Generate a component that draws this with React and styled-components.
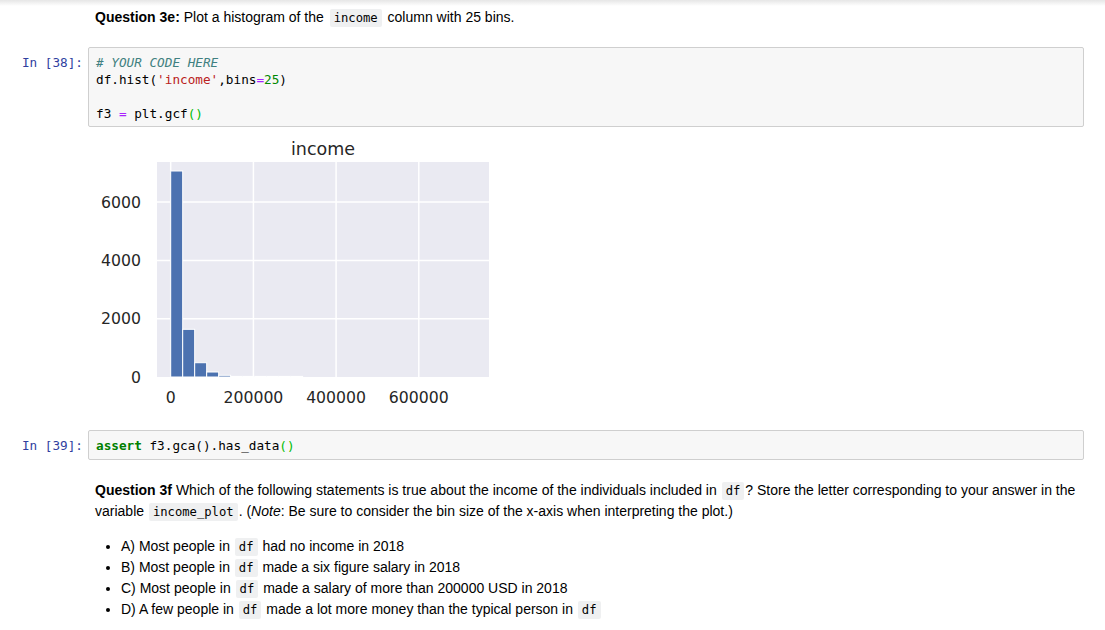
import React from "react";
import styled, { createGlobalStyle } from "styled-components";

const Global = createGlobalStyle`
  html, body { margin: 0; padding: 0; background: #fff; }
  body {
    font-family: "Liberation Sans", Arial, sans-serif;
    font-size: 14px;
    color: #000;
  }
`;

const MONO = `"DejaVu Sans Mono", "Liberation Mono", monospace`;

const TopShade = styled.div`
  height: 6px;
  background: linear-gradient(#e6e6e6, #ffffff);
`;

const Notebook = styled.div`
  width: 1084px;
`;

const TextCell = styled.div`
  padding: ${(p) => p.$pad || "0"};
  padding-left: 95px;
  padding-right: 4px;
  margin-top: ${(p) => p.$mt || "0px"};
  line-height: ${(p) => p.$lh || "20px"};
`;

const Para = styled.p`
  margin: 0;
`;

const Bullets = styled.ul`
  margin: 14px 0 0 0;
  padding-left: 26px;
  line-height: 21px;
`;

const Item = styled.li``;

const Code = styled.code`
  font-family: ${MONO};
  font-size: 12.2px;
  line-height: 1;
  background: #eff0f1;
  padding: 2px 4px;
  border-radius: 2px;
  margin: 0 ${(p) => p.$mx || "1px"};
`;

const CodeCell = styled.div`
  display: flex;
  align-items: flex-start;
  margin-top: ${(p) => p.$mt || "0px"};
`;

const Prompt = styled.div`
  width: 83px;
  padding-right: 5px;
  padding-top: 7px;
  text-align: right;
  color: #303f9f;
  font-family: ${MONO};
  font-size: 12.7px;
  line-height: 17px;
  white-space: pre;
  flex: none;
`;

const InputArea = styled.div`
  flex: 1;
  border: 1px solid #cfcfcf;
  border-radius: 2px;
  background: #f7f7f7;
  padding: 6px 7px ${(p) => p.$pb || "4px"};
  font-family: ${MONO};
  font-size: 12.7px;
  line-height: 17px;
  white-space: pre;
  color: #000;
`;

const Line = styled.div`
  height: 17px;
`;

const Tok = styled.span`
  color: ${(p) =>
    ({
      comment: "#408080",
      string: "#ba2121",
      op: "#aa22ff",
      num: "#008800",
      kw: "#008000",
      bracket: "#00bb00",
    }[p.$k] || "#000")};
  font-style: ${(p) => (p.$k === "comment" ? "italic" : "normal")};
  font-weight: ${(p) => (p.$k === "kw" ? "bold" : "normal")};
`;

const OutputArea = styled.div`
  padding-left: 88px;
  margin-top: 2px;
  height: 300px;
`;

const ChartSvg = styled.svg`
  display: block;
  font-family: "DejaVu Sans", sans-serif;
`;

const X0 = 82.7;
const PX_PER = 82.7 / 200000;
const Y0 = 248;
const PY_PER = 58.3 / 2000;
const BIN = 29000;
const counts = [7067, 1636, 490, 171, 58, 20, 14, 8, 5, 3, 2];

function Histogram() {
  const axL = 69,
    axR = 401,
    axT = 33,
    axB = 248;
  const vGrid = [0, 200000, 400000, 600000];
  const hGrid = [2000, 4000, 6000];
  return (
    <ChartSvg width="420" height="300" viewBox="0 0 420 300">
      <text x="235" y="25.5" fontSize="17.5" fill="#262626" textAnchor="middle">
        income
      </text>
      <rect x={axL} y={axT} width={axR - axL} height={axB - axT} fill="#eaeaf2" />
      {vGrid.map((v) => (
        <line
          key={v}
          x1={X0 + v * PX_PER}
          x2={X0 + v * PX_PER}
          y1={axT}
          y2={axB}
          stroke="#fff"
          strokeWidth="1.5"
        />
      ))}
      {hGrid.map((c) => (
        <line
          key={c}
          x1={axL}
          x2={axR}
          y1={Y0 - c * PY_PER}
          y2={Y0 - c * PY_PER}
          stroke="#fff"
          strokeWidth="1.5"
        />
      ))}
      {counts.map((c, i) => {
        const h = Math.max(c * PY_PER, 0.6);
        return (
          <rect
            key={i}
            x={X0 + i * BIN * PX_PER}
            y={Y0 - h}
            width={BIN * PX_PER}
            height={h}
            fill="#4c72b0"
            stroke="#fff"
            strokeWidth="1"
          />
        );
      })}
      {[0, 2000, 4000, 6000].map((c) => (
        <text
          key={c}
          x="53"
          y={Y0 - c * PY_PER + 5.7}
          fontSize="15.7"
          fill="#262626"
          textAnchor="end"
        >
          {c}
        </text>
      ))}
      {vGrid.map((v) => (
        <text
          key={v}
          x={X0 + v * PX_PER}
          y="273.7"
          fontSize="15.7"
          fill="#262626"
          textAnchor="middle"
        >
          {v}
        </text>
      ))}
    </ChartSvg>
  );
}

export default function App() {
  return (
    <>
      <Global />
      <TopShade />
      <Notebook>
        <TextCell $pad="1px 0 0 0">
          <Para>
            <b>Question 3e:</b> Plot a histogram of the <Code $mx="2px">income</Code> column with 25
            bins.
          </Para>
        </TextCell>

        <CodeCell $mt="20px">
          <Prompt>In [38]:</Prompt>
          <InputArea>
            <Line>
              <Tok $k="comment"># YOUR CODE HERE</Tok>
            </Line>
            <Line>
              df.hist(<Tok $k="string">'income'</Tok>,bins<Tok $k="op">=</Tok>
              <Tok $k="num">25</Tok>)
            </Line>
            <Line />
            <Line>
              f3 <Tok $k="op">=</Tok> plt.gcf<Tok $k="bracket">()</Tok>
            </Line>
          </InputArea>
        </CodeCell>

        <OutputArea>
          <Histogram />
        </OutputArea>

        <CodeCell $mt="1px">
          <Prompt>In [39]:</Prompt>
          <InputArea $pb="5px">
            <Line>
              <Tok $k="kw">assert</Tok> f3.gca().has_data<Tok $k="bracket">()</Tok>
            </Line>
          </InputArea>
        </CodeCell>

        <TextCell $mt="20px" $lh="21px">
          <Para>
            <b>Question 3f</b> Which of the following statements is true about the income of the
            individuals included in <Code>df</Code>? Store the letter corresponding to your answer
            in the variable <Code>income_plot</Code>. (<i>Note</i>: Be sure to consider the bin size
            of the x-axis when interpreting the plot.)
          </Para>
          <Bullets>
            <Item>
              A) Most people in <Code>df</Code> had no income in 2018
            </Item>
            <Item>
              B) Most people in <Code>df</Code> made a six figure salary in 2018
            </Item>
            <Item>
              C) Most people in <Code>df</Code> made a salary of more than 200000 USD in 2018
            </Item>
            <Item>
              D) A few people in <Code>df</Code> made a lot more money than the typical person in{" "}
              <Code>df</Code>
            </Item>
          </Bullets>
        </TextCell>
      </Notebook>
    </>
  );
}
